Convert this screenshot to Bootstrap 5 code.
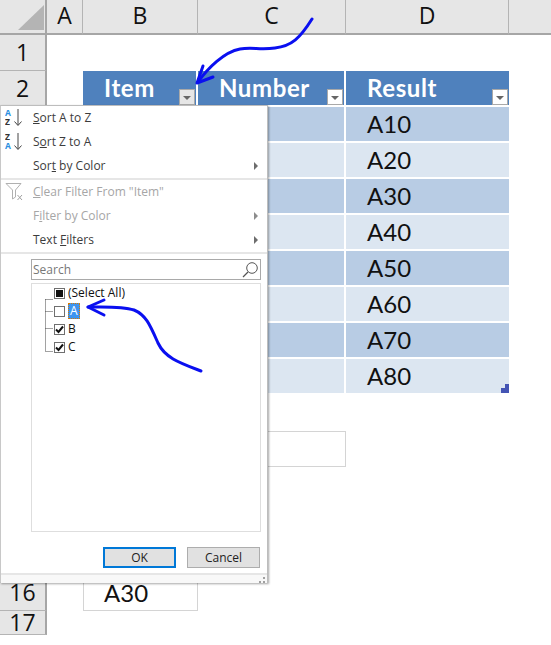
<!doctype html>
<html><head><meta charset="utf-8">
<link href="https://cdn.jsdelivr.net/npm/bootstrap@5.3.0/dist/css/bootstrap.min.css" rel="stylesheet">
<style>
html,body{margin:0;width:551px;height:645px;overflow:hidden;background:#fff}
.stage{position:relative;width:551px;height:645px;overflow:hidden}
.sheet{display:grid;grid-template-columns:47px 36px 115px 148px 163px 42px;grid-template-rows:35px repeat(16,36px);font-family:Lato,"Liberation Sans",sans-serif;font-size:24px;color:#111;line-height:1}
.hd{background:#e6e6e6;display:flex;align-items:center;justify-content:center;border-right:1px solid #b4b4b4;border-bottom:2px solid #a6a6a6;font-family:"Open Sans",sans-serif;font-size:23px;font-weight:400;padding-bottom:2px}
.hd-corner{background:#e6e6e6;border-right:2px solid #a6a6a6;border-bottom:2px solid #a6a6a6;position:relative}
.hd-row{background:#e6e6e6;display:flex;align-items:center;justify-content:center;border-right:2px solid #a6a6a6;border-bottom:1px solid #b4b4b4;font-family:"Open Sans",sans-serif;font-size:23px}
.blank{min-width:0}
.tbl-h{background:#4f81bd;color:#fff;font-weight:700;font-size:24px;letter-spacing:.6px;display:flex;align-items:center;position:relative;border-right:2px solid #fff;border-bottom:2px solid #fff;padding-left:21px}
.tbl-h.last{border-right:0;padding-left:21px}
.cel{display:flex;align-items:center;border-right:2px solid #fff;border-bottom:2px solid #fff;padding-left:21px;position:relative}
.cel.last{border-right:0}
.b1{background:#b8cce4}.b2{background:#dce6f1}
.fbtn{position:absolute;right:1px;bottom:0;width:16px;height:16px;background:#fff;border:1px solid #a9a9a9;display:flex;align-items:center;justify-content:center}
.fbtn.grey{background:#e6e6e6}
.fbtn i{display:block;border-left:4px solid transparent;border-right:4px solid transparent;border-top:4px solid #666;margin-top:2px}
.rz{position:absolute;right:0;bottom:0}
.boxed{border:1px solid #d4d4d4}
.menu{position:absolute;left:0;top:105px;width:268px;height:478px;background:#fff;border:1px solid #bdbdbd;border-left-color:#c8c8c8;box-shadow:1px 1px 2px rgba(0,0,0,.35);font-family:"Open Sans",sans-serif;font-size:12px;color:#3c3c3c;display:flex;flex-direction:column}
.mi{height:24px;display:flex;align-items:center;position:relative;padding-left:32px;flex:none}
.mi.off{color:#a6a6a6}
.mi u{text-underline-offset:1px}
.mi svg.ic{position:absolute;left:4px;top:0}
.caret{position:absolute;right:9px;top:8px;border-left:4px solid #6d6d6d;border-top:4px solid transparent;border-bottom:4px solid transparent}
.caret.off{border-left-color:#8d8d8d}
.sep{height:2px;background:#e6e6e6;flex:none;margin:0}
.search{flex:none;height:21px;margin:5px 6px 3px 30px;border:1px solid #a9a9a9;display:flex;align-items:center;justify-content:space-between;padding:0 1px 0 1px;color:#777}
.tree{flex:none;height:249px;margin:0 6px 0 30px;border:1px solid #dedede;position:relative;color:#111}
.tr{position:absolute;left:22px;height:16px;display:flex;align-items:center;gap:3px}
.ck{width:11px;height:11px;border:1px solid #6f6f6f;background:#fff;display:flex;align-items:center;justify-content:center;flex:none}
.ck b{display:block;width:7px;height:7px;background:#111}
.sel{background:#3d94f0;color:#fff;outline:1px dotted #d97a00;outline-offset:-1px;padding:0 2px;margin-left:0;height:16px;line-height:16px}
.dots{position:absolute;border-color:#444;border-style:dotted;border-width:0}
.btns{flex:none;display:flex;justify-content:flex-end;gap:11px;margin:15px 7px 0 0}
.xb{width:73px;height:21px;background:#e1e1e1;border:1px solid #adadad;font-size:12px;color:#222;padding:0;line-height:1;border-radius:0}
.xb.def{border:2px solid #0078d7}
.grip{flex:none;margin-top:5px;height:10px;border-top:2px solid #e6e6e6;position:relative;background:#f8f8f8;flex-grow:1}
.overlay{position:absolute;left:0;top:0;pointer-events:none}
</style></head><body>
<div class="stage">
<div class="sheet">
 <div class="hd-corner"><svg class="overlay" width="47" height="34"><polygon points="18,30 44,30 44,5" fill="#b4b4b4"/></svg></div>
 <div class="hd">A</div><div class="hd">B</div><div class="hd">C</div><div class="hd">D</div><div class="hd" style="border-right:0"></div>

 <div class="hd-row">1</div><div></div><div></div><div></div><div></div><div></div>

 <div class="hd-row">2</div><div></div>
 <div class="tbl-h">Item<span class="fbtn grey"><i></i></span></div>
 <div class="tbl-h">Number<span class="fbtn"><i></i></span></div>
 <div class="tbl-h last">Result<span class="fbtn"><i></i></span></div><div></div>

 <div class="hd-row">3</div><div></div><div class="cel b1"></div><div class="cel b1"></div><div class="cel last b1">A10</div><div></div>
 <div class="hd-row">4</div><div></div><div class="cel b2"></div><div class="cel b2"></div><div class="cel last b2">A20</div><div></div>
 <div class="hd-row">5</div><div></div><div class="cel b1"></div><div class="cel b1"></div><div class="cel last b1">A30</div><div></div>
 <div class="hd-row">6</div><div></div><div class="cel b2"></div><div class="cel b2"></div><div class="cel last b2">A40</div><div></div>
 <div class="hd-row">7</div><div></div><div class="cel b1"></div><div class="cel b1"></div><div class="cel last b1">A50</div><div></div>
 <div class="hd-row">8</div><div></div><div class="cel b2"></div><div class="cel b2"></div><div class="cel last b2">A60</div><div></div>
 <div class="hd-row">9</div><div></div><div class="cel b1"></div><div class="cel b1"></div><div class="cel last b1">A70</div><div></div>
 <div class="hd-row">10</div><div></div><div class="cel b2"></div><div class="cel b2"></div><div class="cel last b2">A80<svg class="rz" width="11" height="9"><polygon points="3,9 3,4 7,4 7,0 11,0 11,9" fill="#4454b4"/></svg></div><div></div>

 <div class="hd-row">11</div><div></div><div></div><div></div><div></div><div></div>
 <div class="hd-row">12</div><div></div><div></div><div class="boxed"></div><div></div><div></div>
 <div class="hd-row">13</div><div></div><div></div><div></div><div></div><div></div>
 <div class="hd-row">14</div><div></div><div></div><div></div><div></div><div></div>
 <div class="hd-row">15</div><div></div><div></div><div></div><div></div><div></div>
 <div class="hd-row">16</div><div></div><div class="boxed d-flex align-items-center" style="padding-left:20px">A30</div><div></div><div></div><div></div>
 <div class="hd-row">17</div><div></div><div></div><div></div><div></div><div></div>
</div>

<div class="menu">
 <div class="mi"><svg class="ic" width="20" height="24" viewBox="0 0 20 24"><text x="0" y="10" font-family="Open Sans" font-weight="700" font-size="8.5" fill="#2b8fe0">A</text><text x="0" y="19" font-family="Open Sans" font-weight="700" font-size="8.5" fill="#333">Z</text><path d="M13 3V19M9.5 15.5L13 19.5L16.500 15.500" fill="none" stroke="#444" stroke-width="1"/></svg><span><u>S</u>ort A to Z</span></div>
 <div class="mi"><svg class="ic" width="20" height="24" viewBox="0 0 20 24"><text x="0" y="10" font-family="Open Sans" font-weight="700" font-size="8.5" fill="#333">Z</text><text x="0" y="19" font-family="Open Sans" font-weight="700" font-size="8.5" fill="#2b8fe0">A</text><path d="M13 3V19M9.500 15.500L13 19.500L16.500 15.500" fill="none" stroke="#444" stroke-width="1"/></svg><span>S<u>o</u>rt Z to A</span></div>
 <div class="mi"><span>Sor<u>t</u> by Color</span><i class="caret"></i></div>
 <div class="sep" style="margin-top:0"></div>
 <div class="mi off"><svg class="ic" width="20" height="24" viewBox="0 0 20 24"><path d="M1 3.500H16L10.500 10V17L7.500 19V10Z" fill="none" stroke="#b0b0b0" stroke-width="1"/><path d="M12.500 15L17 20M17 15L12.500 20" stroke="#a0a0a0" stroke-width="1"/></svg><span><u>C</u>lear Filter From "Item"</span></div>
 <div class="mi off"><span>F<u>i</u>lter by Color</span><i class="caret off"></i></div>
 <div class="mi"><span>Text <u>F</u>ilters</span><i class="caret"></i></div>
 <div class="sep"></div>
 <div class="search"><span>Search</span><svg width="17" height="18" viewBox="0 0 17 18"><circle cx="10" cy="7" r="5.300" fill="none" stroke="#555"/><path d="M6 11L1 16" stroke="#555" stroke-width="1.300"/></svg></div>
 <div class="tree">
  <svg class="overlay" width="40" height="90"><path d="M13.500 15.500V67.500M13.500 15.500H21M13.500 27.500H21M13.500 44.500H21M13.500 67.500H21" fill="none" stroke="#444" stroke-dasharray="1 1"/></svg>
  <div class="tr" style="top:1px"><span class="ck"><b></b></span><span>(Select All)</span></div>
  <div class="tr" style="top:19px"><span class="ck"></span><span class="sel">A</span></div>
  <div class="tr" style="top:37px"><span class="ck"><svg width="9" height="9" viewBox="0 0 9 9"><path d="M1 4.500L3.500 7L8 1.500" fill="none" stroke="#111" stroke-width="2"/></svg></span><span>B</span></div>
  <div class="tr" style="top:55px"><span class="ck"><svg width="9" height="9" viewBox="0 0 9 9"><path d="M1 4.500L3.500 7L8 1.500" fill="none" stroke="#111" stroke-width="2"/></svg></span><span>C</span></div>
 </div>
 <div class="btns"><button class="btn xb def">OK</button><button class="btn xb">Cancel</button></div>
 <div class="grip"><svg class="overlay" style="left:auto;right:1px;top:1px" width="9" height="8"><path d="M6 1h2v2h-2zM2 5h2v2h-2zM6 5h2v2h-2z" fill="#a0a0a0"/></svg></div>
</div>

<svg class="overlay" width="551" height="645" viewBox="0 0 551 645">
 <g fill="none" stroke="#0a0ff0" stroke-width="3" stroke-linecap="round" stroke-linejoin="round">
  <path d="M312 19C300 38 292 46 275 48C260 50 252 47 240 49C224 52 208 68 198 82"/>
  <path d="M203 66L197 83L213 77"/>
  <path d="M201 371C180 363 165 358 158 343C150 325 146 315 134 310C122 306 105 307 88 307"/>
  <path d="M104 300L88 307L104 315"/>
 </g>
</svg>
</div>
<script src="https://cdn.jsdelivr.net/npm/bootstrap@5.3.0/dist/js/bootstrap.bundle.min.js"></script>
</body></html>
